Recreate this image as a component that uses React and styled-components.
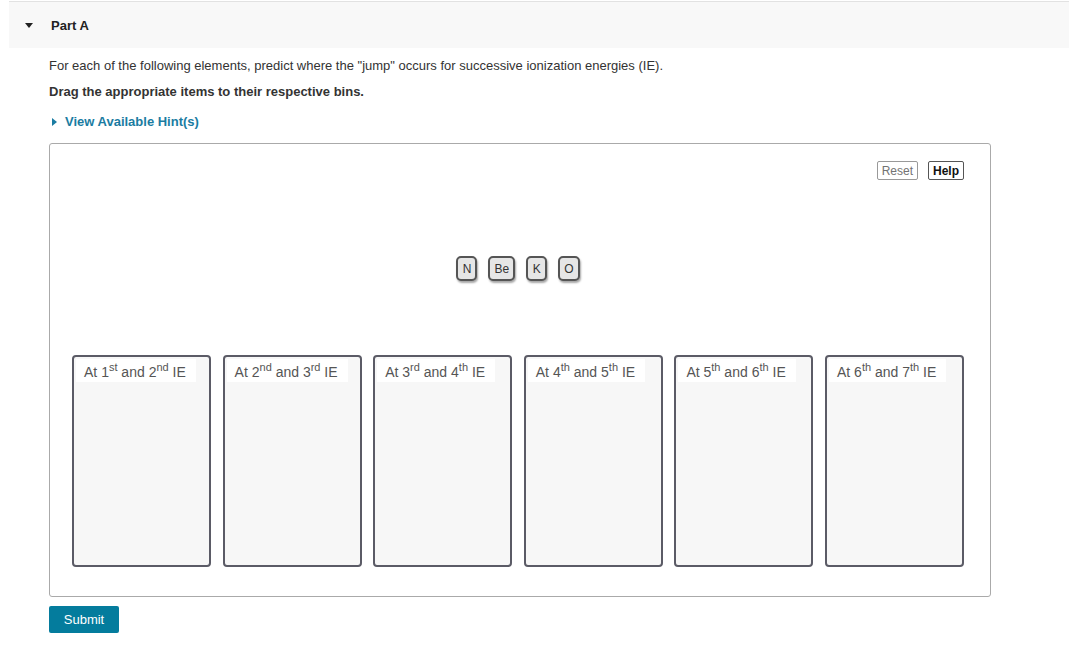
import React from 'react';
import styled, { createGlobalStyle } from 'styled-components';

const GlobalStyle = createGlobalStyle`
  body {
    margin: 0;
    background: #fff;
    font-family: "Liberation Sans", Arial, sans-serif;
    color: #333;
  }
`;

const tiles = ['N', 'Be', 'K', 'O'];

const bins = [
  ['1', 'st', '2', 'nd'],
  ['2', 'nd', '3', 'rd'],
  ['3', 'rd', '4', 'th'],
  ['4', 'th', '5', 'th'],
  ['5', 'th', '6', 'th'],
  ['6', 'th', '7', 'th'],
];

const App = () => (
  <Page>
    <GlobalStyle />
    <Header>
      <Caret />
      <PartTitle>Part A</PartTitle>
    </Header>
    <Body>
      <Prompt>
        For each of the following elements, predict where the "jump" occurs for successive ionization energies (IE).
      </Prompt>
      <Instruction>Drag the appropriate items to their respective bins.</Instruction>
      <HintLink>
        <HintCaret />
        View Available Hint(s)
      </HintLink>
      <DragBox>
        <Toolbar>
          <ToolButton disabled>Reset</ToolButton>
          <ToolButton>Help</ToolButton>
        </Toolbar>
        <TileRow>
          {tiles.map((t) => (
            <Tile key={t}>{t}</Tile>
          ))}
        </TileRow>
        <BinRow>
          {bins.map(([a, sa, b, sb]) => (
            <Bin key={a}>
              <BinLabel>
                At {a}
                <sup>{sa}</sup> and {b}
                <sup>{sb}</sup> IE
              </BinLabel>
            </Bin>
          ))}
        </BinRow>
      </DragBox>
      <SubmitButton>Submit</SubmitButton>
    </Body>
  </Page>
);

const Page = styled.div`
  padding-top: 1px;
  padding-left: 9px;
`;

const Header = styled.div`
  display: flex;
  align-items: center;
  height: 46px;
  border-top: 1px solid #e2e2e2;
  background: #f8f8f8;
`;

const Caret = styled.span`
  width: 0;
  height: 0;
  margin-left: 16px;
  margin-right: 18px;
  border-left: 4px solid transparent;
  border-right: 4px solid transparent;
  border-top: 5px solid #222;
`;

const PartTitle = styled.h2`
  margin: 0;
  font-size: 13px;
  font-weight: bold;
  color: #222;
`;

const Body = styled.div`
  padding: 10px 0 0 40px;
  width: 942px;
`;

const Prompt = styled.p`
  margin: 0;
  font-size: 13px;
  line-height: 16px;
  color: #333;
`;

const Instruction = styled.p`
  margin: 10px 0 0;
  font-size: 13px;
  line-height: 16px;
  font-weight: bold;
  color: #333;
`;

const HintLink = styled.a`
  display: flex;
  align-items: center;
  margin-top: 14px;
  padding-left: 3px;
  font-size: 13px;
  line-height: 16px;
  font-weight: bold;
  color: #1a7ca2;
  cursor: pointer;
`;

const HintCaret = styled.span`
  width: 0;
  height: 0;
  margin-right: 8px;
  border-top: 4.5px solid transparent;
  border-bottom: 4.5px solid transparent;
  border-left: 5px solid #1a7ca2;
`;

const DragBox = styled.div`
  margin-top: 13px;
  height: 454px;
  box-sizing: border-box;
  border: 1px solid #aaa;
  border-radius: 3px;
  padding: 17px 26px 0 22px;
`;

const Toolbar = styled.div`
  display: flex;
  justify-content: flex-end;
  gap: 10px;
`;

const ToolButton = styled.button`
  height: 19px;
  padding: 0 4px;
  font-family: "Liberation Sans", Arial, sans-serif;
  font-size: 12px;
  font-weight: ${(p) => (p.disabled ? 'normal' : 'bold')};
  background: #fff;
  color: ${(p) => (p.disabled ? '#737373' : '#111')};
  border: 1px solid ${(p) => (p.disabled ? '#999' : '#555')};
  border-radius: 2px;
`;

const TileRow = styled.div`
  display: flex;
  justify-content: center;
  gap: 11px;
  margin-top: 76px;
`;

const Tile = styled.div`
  display: flex;
  align-items: center;
  justify-content: center;
  height: 25px;
  min-width: 21px;
  box-sizing: border-box;
  padding: 0 4px;
  font-size: 12px;
  color: #333;
  background: #e6e6e6;
  border: 2px solid #555;
  border-radius: 5px;
  box-shadow: 1px 2px 2px rgba(0, 0, 0, 0.35);
`;

const BinRow = styled.div`
  display: flex;
  justify-content: space-between;
  margin-top: 74px;
`;

const Bin = styled.div`
  width: 139px;
  height: 212px;
  box-sizing: border-box;
  border: 2px solid #5b5b66;
  border-radius: 4px;
  background: #f7f7f7;
  padding: 2px;
`;

const BinLabel = styled.div`
  display: inline-block;
  background: #fff;
  padding: 0 10px 0 8px;
  height: 23px;
  line-height: 27px;
  font-size: 14px;
  color: #555;

  sup {
    font-size: 11px;
    line-height: 0;
    vertical-align: 6px;
  }
`;

const SubmitButton = styled.button`
  margin-top: 9px;
  width: 70px;
  height: 27px;
  background: #047c9d;
  color: #fff;
  border: none;
  border-radius: 2px;
  font-family: "Liberation Sans", Arial, sans-serif;
  font-size: 13px;
`;

export default App;
